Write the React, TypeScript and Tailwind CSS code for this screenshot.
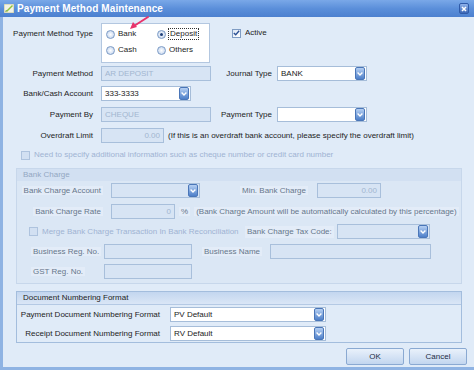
import React from "react";

const Drop = () => (
  <span className="w-[10px] h-[13px] shrink-0 rounded-[2px] border border-[#4a76b8] bg-linear-to-b from-[#b5cff2] to-[#4d7fc9] flex items-center justify-center">
    <svg width="6" height="4" viewBox="0 0 6 4">
      <path d="M0.6 0.6 L3 3 L5.4 0.6" stroke="white" strokeWidth="1.4" fill="none" />
    </svg>
  </span>
);

type BoxProps = {
  w: string;
  value?: string;
  disabled?: boolean;
  right?: boolean;
  drop?: boolean;
};

const Box = ({ w, value = "", disabled, right, drop }: BoxProps) => (
  <div
    className={`${w} h-[15px] shrink-0 flex items-center border ${
      disabled
        ? "bg-[#d7e4f4] border-[#a8bfdb] text-[#a2b6d0]"
        : "bg-white border-[#a6bdd9] text-[#1a1a1a]"
    }`}
  >
    <span className={`flex-1 px-[3px] leading-none ${right ? "text-right" : ""}`}>{value}</span>
    {drop && (
      <span className="pr-px">
        <Drop />
      </span>
    )}
  </div>
);

const Radio = ({ on }: { on?: boolean }) => (
  <span className="w-[9px] h-[9px] rounded-full border border-[#7d9cc6] bg-radial from-white to-[#b9cdea] flex items-center justify-center shrink-0">
    {on && <span className="w-[3px] h-[3px] rounded-full bg-[#1d3f7a]" />}
  </span>
);

const Check = ({ on, disabled }: { on?: boolean; disabled?: boolean }) => (
  <span
    className={`w-[9px] h-[9px] shrink-0 border flex items-center justify-center ${
      disabled ? "border-[#aec3de] bg-[#d2e0f2]" : "border-[#7f9cc4] bg-linear-to-br from-[#dfe8f5] to-white"
    }`}
  >
    {on && (
      <svg width="7" height="6" viewBox="0 0 7 6">
        <path d="M0.8 3 L2.7 4.8 L6.2 0.8" stroke="#2a4f94" strokeWidth="1.3" fill="none" />
      </svg>
    )}
  </span>
);

const GLabel = ({ children }: { children: React.ReactNode }) => (
  <span className="bg-[#e3ecf8] px-[2px] text-[#66778b] leading-[12px]">{children}</span>
);

export default function App() {
  return (
    <div className="w-[474px] h-[370px] overflow-hidden flex flex-col bg-[#e0ebf8] font-['Liberation_Sans',Arial,sans-serif] text-[8px] text-[#1d1d1d] relative">
      {/* title bar */}
      <div className="h-[17px] shrink-0 flex items-center bg-linear-to-b from-[#7aa8e8] via-[#5b8fda] to-[#4c80cf] pl-[4px] pr-[5px]">
        <svg width="10" height="9" viewBox="0 0 10 9" className="shrink-0">
          <rect x="0" y="0" width="10" height="9" fill="#f2f2e6" />
          <rect x="0" y="0" width="10" height="9" fill="none" stroke="#c7c79a" strokeWidth="1" />
          <path d="M2 7 L8 1 L9 2 L3 8 Z" fill="#8fc23a" />
          <path d="M1 8 L2 6 L3 7 Z" fill="#6a8f2a" />
        </svg>
        <span className="ml-[3px] text-white font-bold text-[10px] leading-none tracking-[0.1px]">
          Payment Method Maintenance
        </span>
        <span className="ml-auto w-[10px] h-[11px] rounded-[2px] border border-[#2f5aa8] bg-linear-to-b from-[#8fb2ea] to-[#3d68b7] flex items-center justify-center">
          <svg width="6" height="6" viewBox="0 0 6 6">
            <path d="M1 1 L5 5 M5 1 L1 5" stroke="white" strokeWidth="1.5" />
          </svg>
        </span>
      </div>

      {/* body */}
      <div className="flex-1 flex flex-col border-l-[3px] border-b-[3px] border-[#8fb3e3]">
        {/* Payment method type */}
        <div className="flex items-start mt-[6px]">
          <div className="w-[90px] text-right pt-[6px] leading-[10px]">Payment Method Type</div>
          <div className="ml-[8px] w-[109px] h-[40px] bg-white border border-[#b3c7e0] pl-[4px] pt-[4px]">
            <div className="grid grid-cols-[51px_auto] gap-y-[4px]">
              <div className="h-[12px] flex items-center gap-[3px]">
                <Radio />
                <span>Bank</span>
              </div>
              <div className="h-[12px] flex items-center gap-[3px]">
                <Radio on />
                <span className="outline-1 outline-dotted outline-[#333] px-px leading-[10px]">Deposit</span>
              </div>
              <div className="h-[12px] flex items-center gap-[3px]">
                <Radio />
                <span>Cash</span>
              </div>
              <div className="h-[12px] flex items-center gap-[3px]">
                <Radio />
                <span>Others</span>
              </div>
            </div>
          </div>
          <div className="ml-[22px] mt-[5px] flex items-center gap-[4px] h-[10px]">
            <Check on />
            <span>Active</span>
          </div>
        </div>

        {/* Payment Method */}
        <div className="flex items-center mt-[3px]">
          <div className="w-[90px] text-right">Payment Method</div>
          <div className="ml-[8px]">
            <Box w="w-[110px]" value="AR DEPOSIT" disabled />
          </div>
          <div className="w-[61px] text-right">Journal Type</div>
          <div className="ml-[5px]">
            <Box w="w-[90px]" value="BANK" drop />
          </div>
        </div>

        {/* Bank/Cash */}
        <div className="flex items-center mt-[5px]">
          <div className="w-[90px] text-right">Bank/Cash Account</div>
          <div className="ml-[8px]">
            <Box w="w-[90px]" value="333-3333" drop />
          </div>
        </div>

        {/* Payment By */}
        <div className="flex items-center mt-[6px]">
          <div className="w-[90px] text-right">Payment By</div>
          <div className="ml-[8px]">
            <Box w="w-[110px]" value="CHEQUE" disabled />
          </div>
          <div className="w-[61px] text-right">Payment Type</div>
          <div className="ml-[5px]">
            <Box w="w-[90px]" drop />
          </div>
        </div>

        {/* Overdraft */}
        <div className="flex items-center mt-[6px]">
          <div className="w-[90px] text-right">Overdraft Limit</div>
          <div className="ml-[8px]">
            <Box w="w-[63px]" value="0.00" disabled right />
          </div>
          <span className="ml-[4px]">(If this is an overdraft bank account, please specify the overdraft limit)</span>
        </div>

        {/* need to specify */}
        <div className="flex items-center mt-[7px] pl-[18px] gap-[4px] h-[10px]">
          <Check disabled />
          <span className="text-[#9fb3d3]">
            Need to specify additional information such as cheque number or credit card number
          </span>
        </div>

        {/* Bank Charge group */}
        <div className="ml-[13px] w-[446px] mt-[8px] border border-[#c7d7eb] bg-[#dbe7f5] pb-[4px]">
          <div className="h-[12px] bg-[#d2e0f2] flex items-center pl-[6px] text-[#93a7c2]">Bank Charge</div>
          {/* row 1 */}
          <div className="flex items-center mt-[2px]">
            <div className="w-[88px] text-right pr-[2px]">
              <GLabel>Bank Charge Account</GLabel>
            </div>
            <div className="ml-[6px]">
              <Box w="w-[89px]" disabled drop />
            </div>
            <div className="w-[110px] text-right pr-[2px]">
              <GLabel>Min. Bank Charge</GLabel>
            </div>
            <div className="ml-[7px]">
              <Box w="w-[64px]" value="0.00" disabled right />
            </div>
          </div>
          {/* row 2 */}
          <div className="flex items-center mt-[6px]">
            <div className="w-[88px] text-right pr-[2px]">
              <GLabel>Bank Charge Rate</GLabel>
            </div>
            <div className="ml-[6px]">
              <Box w="w-[64px]" value="0" disabled right />
            </div>
            <span className="ml-[4px]">
              <GLabel>%</GLabel>
            </span>
            <span className="ml-[4px]">
              <GLabel>(Bank Charge Amount will be automatically calculated by this percentage)</GLabel>
            </span>
          </div>
          {/* row 3 */}
          <div className="flex items-center mt-[5px]">
            <div className="w-[228px] pl-[12px] flex items-center gap-[4px]">
              <Check disabled />
              <span className="text-[#9fb3d3]">Merge Bank Charge Transaction In Bank Reconciliation</span>
            </div>
            <GLabel>Bank Charge Tax Code:</GLabel>
            <div className="ml-[3px]">
              <Box w="w-[93px]" disabled drop />
            </div>
          </div>
          {/* row 4 */}
          <div className="flex items-center mt-[5px]">
            <div className="w-[87px] pl-[14px]">
              <GLabel>Business Reg. No.</GLabel>
            </div>
            <Box w="w-[88px]" disabled />
            <div className="w-[70px] text-right">
              <GLabel>Business Name</GLabel>
            </div>
            <div className="ml-[8px]">
              <Box w="w-[161px]" disabled />
            </div>
          </div>
          {/* row 5 */}
          <div className="flex items-center mt-[5px]">
            <div className="w-[87px] pl-[14px]">
              <GLabel>GST Reg. No.</GLabel>
            </div>
            <Box w="w-[88px]" disabled />
          </div>
        </div>

        {/* Document Numbering group */}
        <div className="ml-[13px] w-[446px] mt-[7px] border border-[#a3bddd] pb-[1px]">
          <div className="h-[13px] bg-linear-to-b from-[#c3d6ef] to-[#dae6f6] border-b border-[#b4c9e4] flex items-center pl-[6px]">
            Document Numbering Format
          </div>
          <div className="flex items-center mt-[2px]">
            <div className="w-[145px] text-right pr-[2px]">Payment Document Numbering Format</div>
            <div className="ml-[8px]">
              <Box w="w-[156px]" value="PV Default" drop />
            </div>
          </div>
          <div className="flex items-center mt-[4px]">
            <div className="w-[145px] text-right pr-[2px]">Receipt Document Numbering Format</div>
            <div className="ml-[8px]">
              <Box w="w-[156px]" value="RV Default" drop />
            </div>
          </div>
        </div>

        {/* buttons */}
        <div className="flex justify-end gap-[5px] mt-[5px] pr-[7px]">
          <button className="w-[58px] h-[17px] rounded-[2px] border border-[#8aa9d2] bg-linear-to-b from-[#e9f1fb] to-[#c3d6ef] text-[8px] text-[#1d2b44]">
            OK
          </button>
          <button className="w-[58px] h-[17px] rounded-[2px] border border-[#8aa9d2] bg-linear-to-b from-[#e9f1fb] to-[#c3d6ef] text-[8px] text-[#1d2b44]">
            Cancel
          </button>
        </div>
      </div>

      {/* red pointer arrow */}
      <svg className="absolute left-[126px] top-[14px]" width="26" height="18" viewBox="0 0 26 18">
        <path d="M22 3 L8 12" stroke="#e8336b" strokeWidth="2" strokeLinecap="round" />
        <path d="M4 15 L7 8 L11 13 Z" fill="#e8336b" />
      </svg>
    </div>
  );
}
